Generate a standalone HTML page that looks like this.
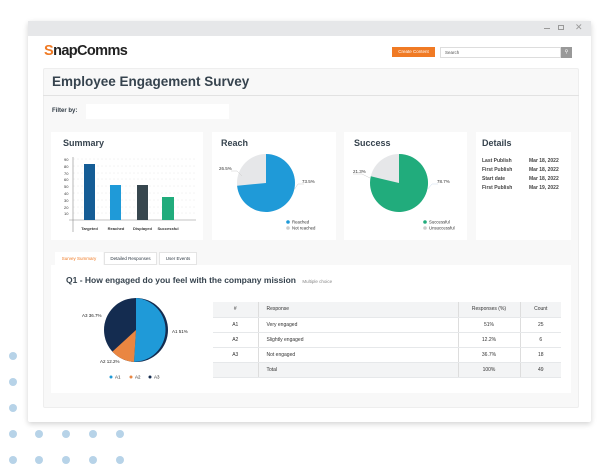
<!DOCTYPE html>
<html><head><meta charset="utf-8"><style>
*{margin:0;padding:0;box-sizing:border-box}
body{width:600px;height:476px;background:#fff;position:relative;overflow:hidden;font-family:"Liberation Sans",sans-serif;color:#2f3a44}
.a{position:absolute}
.dot{position:absolute;width:8px;height:8px;border-radius:50%;background:#b7d3e8}
.card{position:absolute;background:#fff}
.h{font-weight:bold;font-size:9px;color:#36434e}
.s{font-size:5px;color:#333}
table{border-collapse:collapse;font-size:5px}
td{height:15px;border-bottom:1px solid #e6e8ea;color:#333}
</style></head><body>
<div class="dot" style="left:9px;top:352px"></div>
<div class="dot" style="left:9px;top:378px"></div>
<div class="dot" style="left:9px;top:404px"></div>
<div class="dot" style="left:9px;top:430px"></div><div class="dot" style="left:35px;top:430px"></div><div class="dot" style="left:62px;top:430px"></div><div class="dot" style="left:89px;top:430px"></div><div class="dot" style="left:116px;top:430px"></div>
<div class="dot" style="left:9px;top:456px"></div><div class="dot" style="left:35px;top:456px"></div><div class="dot" style="left:62px;top:456px"></div><div class="dot" style="left:89px;top:456px"></div><div class="dot" style="left:116px;top:456px"></div>
<div class="a" style="left:28px;top:21px;width:563px;height:401px;background:#fff;box-shadow:0 2px 6px rgba(0,0,0,.18);border-radius:2px"></div>
<div class="a" style="left:28px;top:21px;width:563px;height:15px;background:#e6e7e9"></div>
<div class="a" style="left:544px;top:28px;width:6px;height:1px;background:#999"></div>
<div class="a" style="left:558px;top:25px;width:6px;height:5px;border:1px solid #999"></div>
<div class="a" style="left:575px;top:22px;font-size:9px;color:#999">✕</div>
<div class="a" style="left:44px;top:43px;font-size:14.5px;font-weight:bold;letter-spacing:-.6px;color:#222"><span style="color:#f07a24">S</span>napComms</div>
<div class="a" style="left:392px;top:47px;width:43px;height:10px;background:#f07a24;color:#fff;font-size:4.5px;line-height:10px;text-align:center">Create Content</div>
<div class="a" style="left:440px;top:47px;width:121px;height:11px;border:1px solid #ddd;font-size:4.5px;line-height:9px;padding-left:4px;color:#555">Search</div>
<div class="a" style="left:561px;top:47px;width:11px;height:11px;background:#999;color:#fff;font-size:5px;text-align:center;line-height:11px">⚲</div>
<div class="a" style="left:43px;top:68px;width:536px;height:340px;background:#f8f8f8;border:1px solid #eee;border-radius:2px"></div>
<div class="a" style="left:52px;top:74px;font-size:13.5px;font-weight:bold;color:#36434e">Employee Engagement Survey</div>
<div class="a" style="left:43px;top:95px;width:536px;height:1px;background:#e2e2e2"></div>
<div class="a" style="left:52px;top:108px;font-size:6px;font-weight:bold">Filter by:</div>
<div class="a" style="left:86px;top:104px;width:143px;height:15px;background:#fff"></div>
<div class="card" style="left:51px;top:132px;width:152px;height:108px"></div>
<div class="a h" style="left:63px;top:138px">Summary</div>
<svg class="a" style="left:51px;top:132px" width="152" height="108">
<g stroke="#e8e8e8" stroke-dasharray="2 2" stroke-width=".5">
<line x1="22" y1="27" x2="145" y2="27"/><line x1="22" y1="34" x2="145" y2="34"/><line x1="22" y1="41" x2="145" y2="41"/><line x1="22" y1="47" x2="145" y2="47"/><line x1="22" y1="54" x2="145" y2="54"/><line x1="22" y1="61" x2="145" y2="61"/><line x1="22" y1="68" x2="145" y2="68"/><line x1="22" y1="75" x2="145" y2="75"/><line x1="22" y1="81" x2="145" y2="81"/></g>
<line x1="22" y1="25" x2="22" y2="100" stroke="#888" stroke-width=".6"/>
<line x1="18" y1="88" x2="145" y2="88" stroke="#888" stroke-width=".6"/>
<g font-size="4" fill="#333" font-family="Liberation Sans"><text x="13" y="29">90</text><text x="13" y="36">80</text><text x="13" y="43">70</text><text x="13" y="49">60</text><text x="13" y="56">50</text><text x="13" y="63">40</text><text x="13" y="70">30</text><text x="13" y="77">20</text><text x="13" y="83">10</text>
<text x="38.5" y="98" text-anchor="middle" font-weight="bold">Targeted</text><text x="65" y="98" text-anchor="middle" font-weight="bold">Reached</text><text x="91.5" y="98" text-anchor="middle" font-weight="bold">Displayed</text><text x="117" y="98" text-anchor="middle" font-weight="bold">Successful</text></g>
<rect x="33" y="32" width="11" height="56" fill="#155d96"/>
<rect x="59" y="53" width="11" height="35" fill="#1f9ad8"/>
<rect x="86" y="53" width="11" height="35" fill="#37474f"/>
<rect x="111" y="65" width="12" height="23" fill="#21ac7c"/>
</svg>
<div class="card" style="left:212px;top:132px;width:124px;height:108px"></div>
<div class="a h" style="left:221px;top:138px">Reach</div>
<svg class="a" style="left:212px;top:132px" width="124" height="108" font-family="Liberation Sans">
<circle cx="54" cy="51" r="29" fill="#e6e7e9"/>
<path d="M54 51 L54 22 A29 29 0 1 1 25.1 53.7 Z" fill="#1f9ad8"/>
<polyline points="19,39 25,39 30,44" fill="none" stroke="#ccc" stroke-width=".5"/>
<polyline points="82,58 86,52 92,52" fill="none" stroke="#ccc" stroke-width=".5"/>
<text x="7" y="38" font-size="4.5" fill="#333">26.5%</text>
<text x="90" y="51" font-size="4.5" fill="#333">73.5%</text>
<circle cx="76" cy="90" r="1.8" fill="#1f9ad8"/><text x="80" y="91.5" font-size="4.3" fill="#333">Reached</text>
<circle cx="76" cy="96" r="1.8" fill="#ccc"/><text x="80" y="97.5" font-size="4.3" fill="#333">Not reached</text>
</svg>
<div class="card" style="left:344px;top:132px;width:123px;height:108px"></div>
<div class="a h" style="left:354px;top:138px">Success</div>
<svg class="a" style="left:344px;top:132px" width="123" height="108" font-family="Liberation Sans">
<circle cx="55" cy="51" r="29" fill="#e6e7e9"/>
<path d="M55 51 L55 22 A29 29 0 1 1 26.8 44.3 Z" fill="#21ac7c"/>
<polyline points="9,42 18,42 26,46" fill="none" stroke="#ccc" stroke-width=".5"/>
<polyline points="83,58 88,52 94,52" fill="none" stroke="#cde" stroke-width=".5"/>
<text x="9" y="41" font-size="4.5" fill="#333">21.3%</text>
<text x="93" y="51" font-size="4.5" fill="#333">78.7%</text>
<circle cx="81" cy="90" r="1.8" fill="#21ac7c"/><text x="85" y="91.5" font-size="4.3" fill="#333">Successful</text>
<circle cx="81" cy="96" r="1.8" fill="#ccc"/><text x="85" y="97.5" font-size="4.3" fill="#333">Unsuccessful</text>
</svg>
<div class="card" style="left:476px;top:132px;width:95px;height:108px"></div>
<div class="a h" style="left:482px;top:138px">Details</div>
<div class="a s" style="left:482px;top:157px;line-height:9px;font-weight:bold;color:#444">Last Publish<br>First Publish<br>Start date<br>First Publish</div>
<div class="a s" style="left:529px;top:157px;line-height:9px;font-weight:bold;color:#444">Mar 18, 2022<br>Mar 18, 2022<br>Mar 18, 2022<br>Mar 19, 2022</div>
<div class="a" style="left:55px;top:252px;width:48px;height:13px;background:#fff;font-size:4.5px;line-height:13px;text-align:center;color:#f07a24">Survey Summary</div>
<div class="a" style="left:104px;top:252px;width:53px;height:13px;background:#fff;border:1px solid #e4e4e4;font-size:4.5px;line-height:11px;text-align:center">Detailed Responses</div>
<div class="a" style="left:159px;top:252px;width:38px;height:13px;background:#fff;border:1px solid #e4e4e4;font-size:4.5px;line-height:11px;text-align:center">User Events</div>
<div class="card" style="left:51px;top:265px;width:520px;height:128px"></div>
<div class="a" style="left:66px;top:275px;font-size:8.5px;font-weight:bold;color:#36434e">Q1 - How engaged do you feel with the company mission <span style="font-size:4.5px;font-weight:normal;color:#888;margin-left:4px">Multiple choice</span></div>
<svg class="a" style="left:70px;top:290px" width="140" height="100" font-family="Liberation Sans">
<circle cx="66" cy="40" r="32" fill="#142c50"/>
<path d="M66 40 L66 8 A32 32 0 0 1 64 71.9 Z" fill="#1f9ad8"/>
<path d="M66 40 L64 71.9 A32 32 0 0 1 42.4 61.6 Z" fill="#ea8641"/>
<text x="12" y="27" font-size="4.5" fill="#222">A3 36.7%</text>
<text x="102" y="43" font-size="4.5" fill="#222">A1 51%</text>
<text x="30" y="73" font-size="4.5" fill="#222">A2 12.2%</text>
<circle cx="41" cy="87" r="1.5" fill="#1f9ad8"/><text x="45" y="88.5" font-size="4.5" fill="#222">A1</text>
<circle cx="61" cy="87" r="1.5" fill="#ea8641"/><text x="65" y="88.5" font-size="4.5" fill="#222">A2</text>
<circle cx="80" cy="87" r="1.5" fill="#142c50"/><text x="84" y="88.5" font-size="4.5" fill="#222">A3</text>
</svg>
<table class="a" style="left:213px;top:302px;width:348px">
<tr style="background:#f3f4f5"><td style="width:45px;text-align:center;border-right:1px solid #ddd">#</td><td style="padding-left:8px;border-right:1px solid #ddd">Response</td><td style="width:62px;text-align:center;border-right:1px solid #ddd">Responses (%)</td><td style="width:41px;text-align:center">Count</td></tr>
<tr><td style="text-align:center;border-right:1px solid #ddd">A1</td><td style="padding-left:8px;border-right:1px solid #ddd">Very engaged</td><td style="text-align:center;border-right:1px solid #ddd">51%</td><td style="text-align:center">25</td></tr>
<tr><td style="text-align:center;border-right:1px solid #ddd">A2</td><td style="padding-left:8px;border-right:1px solid #ddd">Slightly engaged</td><td style="text-align:center;border-right:1px solid #ddd">12.2%</td><td style="text-align:center">6</td></tr>
<tr><td style="text-align:center;border-right:1px solid #ddd">A3</td><td style="padding-left:8px;border-right:1px solid #ddd">Not engaged</td><td style="text-align:center;border-right:1px solid #ddd">36.7%</td><td style="text-align:center">18</td></tr>
<tr style="background:#f3f4f5"><td style="border-right:1px solid #ddd"></td><td style="padding-left:8px;border-right:1px solid #ddd">Total</td><td style="text-align:center;border-right:1px solid #ddd">100%</td><td style="text-align:center">49</td></tr>
</table>
</body></html>
